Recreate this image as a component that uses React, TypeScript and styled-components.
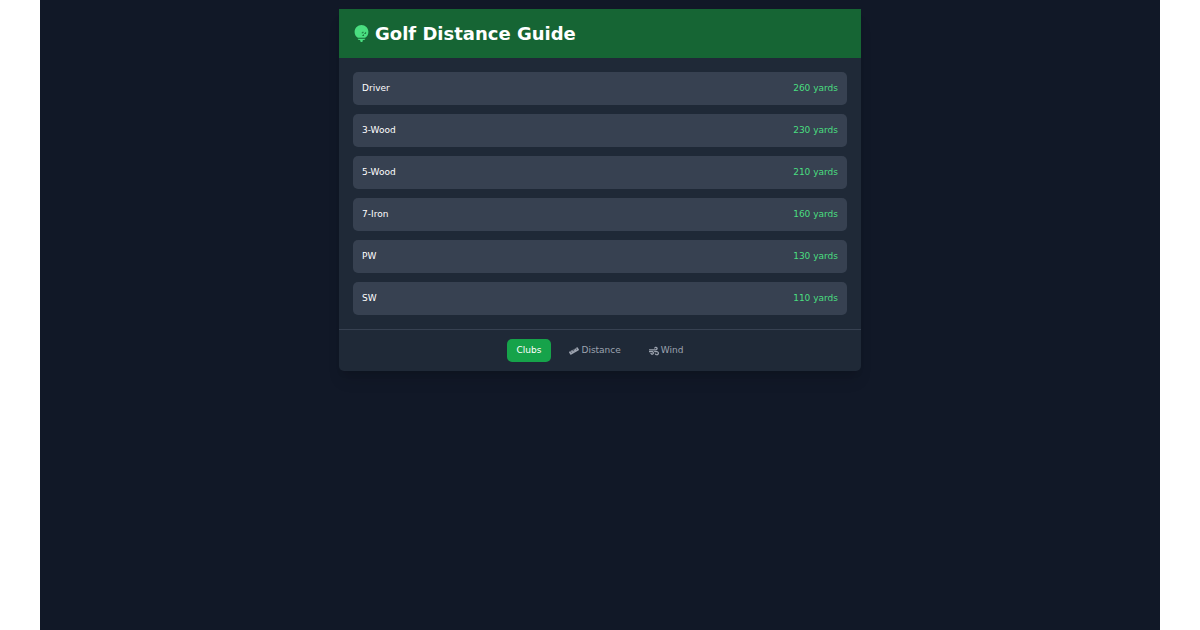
import React, { useState } from 'react';
import styled, { createGlobalStyle } from 'styled-components';
import { FaGolfBall, FaRuler, FaWind } from 'react-icons/fa';

const GlobalStyle = createGlobalStyle`
  *, *::before, *::after { box-sizing: border-box; }
  body {
    margin: 0;
    background: #ffffff;
    font-family: 'DejaVu Sans', sans-serif;
  }
`;

const Page = styled.div`
  min-height: 100vh;
  margin: 0 40px;
  padding: 9px;
  background: #111827;
  color: #ffffff;
  font-size: 9px;
  line-height: 13px;
`;

const Card = styled.main`
  max-width: 522px;
  margin: 0 auto;
  border-radius: 5px;
  background: #1f2937;
  box-shadow: 0 12px 15px -3px rgba(0, 0, 0, 0.1), 0 5px 6px -3px rgba(0, 0, 0, 0.1);
`;

const Header = styled.header`
  padding: 14px;
  background: #166534;
`;

const Title = styled.h1`
  display: flex;
  align-items: center;
  gap: 5px;
  margin: 0;
  font-size: 18px;
  font-weight: 700;
  line-height: 21px;

  svg {
    color: #4ade80;
  }
`;

const ClubList = styled.ul`
  display: flex;
  flex-direction: column;
  gap: 9px;
  margin: 0;
  padding: 14px;
  list-style: none;
`;

const ClubRow = styled.li`
  display: flex;
  justify-content: space-between;
  padding: 10px 9px;
  border-radius: 5px;
  background: #374151;
`;

const Yards = styled.span`
  color: #4ade80;
`;

const TabBar = styled.nav`
  display: flex;
  justify-content: center;
  gap: 8px;
  padding: 9px;
  border-top: 1px solid #374151;
`;

const Tab = styled.button<{ $active: boolean }>`
  display: flex;
  align-items: center;
  gap: 2px;
  padding: 5px 10px;
  border: 0;
  border-radius: 5px;
  background: ${({ $active }) => ($active ? '#16a34a' : 'transparent')};
  color: ${({ $active }) => ($active ? '#ffffff' : '#9ca3af')};
  font: inherit;
  cursor: pointer;
`;

const clubs = [
  { name: 'Driver', yards: 260 },
  { name: '3-Wood', yards: 230 },
  { name: '5-Wood', yards: 210 },
  { name: '7-Iron', yards: 160 },
  { name: 'PW', yards: 130 },
  { name: 'SW', yards: 110 },
];

const tabs = [
  { label: 'Clubs', Icon: null },
  { label: 'Distance', Icon: FaRuler },
  { label: 'Wind', Icon: FaWind },
];

export default function App() {
  const [active, setActive] = useState('Clubs');

  return (
    <>
      <GlobalStyle />
      <Page>
        <Card>
          <Header>
            <Title>
              <FaGolfBall size={17} aria-hidden />
              Golf Distance Guide
            </Title>
          </Header>
          <ClubList>
            {clubs.map((club) => (
              <ClubRow key={club.name}>
                <span>{club.name}</span>
                <Yards>{club.yards} yards</Yards>
              </ClubRow>
            ))}
          </ClubList>
          <TabBar>
            {tabs.map(({ label, Icon }) => (
              <Tab
                key={label}
                type="button"
                $active={active === label}
                onClick={() => setActive(label)}
              >
                {Icon && <Icon size={10} aria-hidden />}
                {label}
              </Tab>
            ))}
          </TabBar>
        </Card>
      </Page>
    </>
  );
}
